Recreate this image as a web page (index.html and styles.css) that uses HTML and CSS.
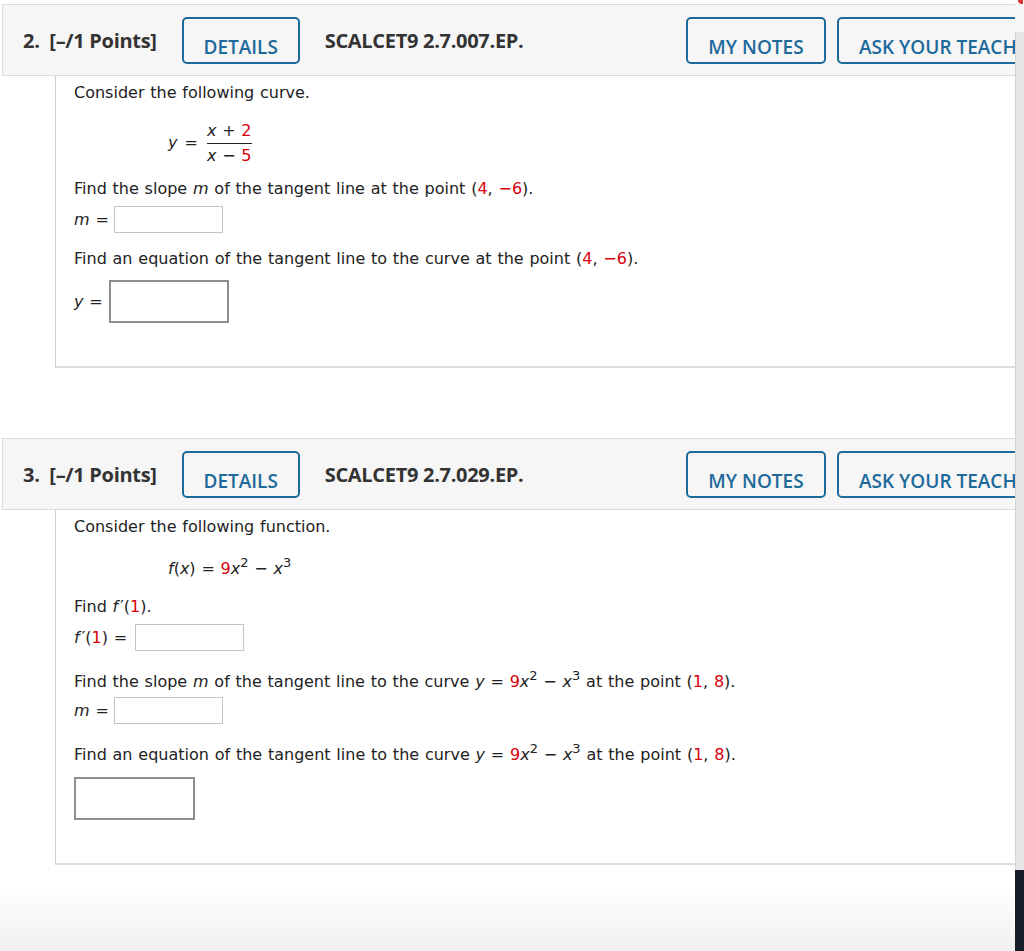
FILE: index.html
```html
<!DOCTYPE html>
<html>
<head>
<meta charset="utf-8">
<title>SCALCET9</title>
<link rel="stylesheet" href="styles.css">
</head>
<body>
<div class="screen">
  <main class="main">
    <section class="question">
      <header class="qhead">
        <span class="qnum">2.&nbsp; [–/1 Points]</span>
        <span class="btn details">DETAILS</span>
        <span class="qcode">SCALCET9 2.7.007.EP.</span>
        <span class="btn notes">MY NOTES</span>
        <span class="btn ask">ASK YOUR TEACHER</span>
      </header>
      <div class="qbody">
        <p class="line l-consider">Consider the following curve.</p>
        <div class="eq eq-frac">
          <span class="var">y</span><span class="op">=</span>
          <span class="frac">
            <span class="num"><span class="var">x</span> + <span class="red">2</span></span>
            <span class="den"><span class="var">x</span> − <span class="red">5</span></span>
          </span>
        </div>
        <p class="line l-slope1">Find the slope <span class="var">m</span> of the tangent line at the point (<span class="red">4</span>, <span class="red">−6</span>).</p>
        <div class="answer a-m1"><span class="var">m</span>&nbsp;=<span class="box small"></span></div>
        <p class="line l-eq1">Find an equation of the tangent line to the curve at the point (<span class="red">4</span>, <span class="red">−6</span>).</p>
        <div class="answer a-y1"><span class="var">y</span>&nbsp;=<span class="box big"></span></div>
      </div>
    </section>

    <section class="question q3">
      <header class="qhead">
        <span class="qnum">3.&nbsp; [–/1 Points]</span>
        <span class="btn details">DETAILS</span>
        <span class="qcode">SCALCET9 2.7.029.EP.</span>
        <span class="btn notes">MY NOTES</span>
        <span class="btn ask">ASK YOUR TEACHER</span>
      </header>
      <div class="qbody">
        <p class="line l-consider">Consider the following function.</p>
        <div class="eq eq-fx"><span class="var">f</span>(<span class="var">x</span>) = <span class="red">9</span><span class="var">x</span><sup>2</sup> − <span class="var">x</span><sup>3</sup></div>
        <p class="line l-find">Find <span class="var">f</span><span class="prime">′</span>(<span class="red">1</span>).</p>
        <div class="answer a-f"><span class="var">f</span><span class="prime">′</span>(<span class="red">1</span>)&nbsp;=<span class="box small"></span></div>
        <p class="line l-slope2">Find the slope <span class="var">m</span> of the tangent line to the curve <span class="var">y</span> = <span class="red">9</span><span class="var">x</span><sup>2</sup> − <span class="var">x</span><sup>3</sup> at the point (<span class="red">1</span>, <span class="red">8</span>).</p>
        <div class="answer a-m2"><span class="var">m</span>&nbsp;=<span class="box small"></span></div>
        <p class="line l-eq2">Find an equation of the tangent line to the curve <span class="var">y</span> = <span class="red">9</span><span class="var">x</span><sup>2</sup> − <span class="var">x</span><sup>3</sup> at the point (<span class="red">1</span>, <span class="red">8</span>).</p>
        <div class="answer a-last"><span class="box big wide"></span></div>
      </div>
    </section>
  </main>
  <aside class="scroll">
    <span class="scroll-top"><span class="pen"></span></span>
    <span class="scroll-track"></span>
    <span class="scroll-dark"></span>
  </aside>
</div>
</body>
</html>
```

FILE: styles.css
```css
html, body {
  margin: 0;
  padding: 0;
}
body {
  width: 1024px;
  height: 951px;
  overflow: hidden;
  background: linear-gradient(to bottom, #ffffff 0px, #ffffff 885px, #f0f0f0 951px);
  font-family: "DejaVu Sans", Verdana, sans-serif;
  color: #222;
}
.screen {
  display: flex;
  height: 951px;
}
.main {
  width: 1015px;
  flex: none;
  overflow: hidden;
  padding-top: 4px;
  box-sizing: border-box;
}
.question + .question {
  margin-top: 70px;
}
.qhead {
  margin-left: 2px;
  width: 1075px;
  height: 72px;
  box-sizing: border-box;
  border: 1px solid #dcdcdc;
  border-right: none;
  background: #f6f6f6;
  display: flex;
  align-items: center;
  padding-left: 20px;
  font-family: "Open Sans", sans-serif;
  font-weight: 700;
  font-size: 20px;
  color: #333;
  white-space: nowrap;
}
.qnum {
  margin-right: 25px;
  letter-spacing: -0.3px;
}
.qcode {
  margin-left: 25px;
  letter-spacing: -0.3px;
}
.btn {
  flex: none;
  box-sizing: border-box;
  height: 47px;
  border: 2px solid #1d6a9b;
  border-radius: 5px;
  color: #1d6a9b;
  font-weight: 600;
  font-size: 19px;
  line-height: 22px;
  padding: 17px 20px 4px;
  text-align: center;
}
.details {
  width: 118px;
  padding-left: 0;
  padding-right: 0;
}
.notes {
  width: 140px;
  margin-left: auto;
  padding-left: 0;
  padding-right: 0;
}
.ask {
  margin-left: 11px;
  width: 240px;
  text-align: left;
}
.qbody {
  margin-left: 55px;
  border-left: 1px solid #cfcfcf;
  border-bottom: 2px solid #dedede;
  padding: 7px 0 43px 18px;
  font-size: 16px;
  line-height: 20px;
  word-spacing: 0.7px;
}
.line {
  margin: 0;
  white-space: nowrap;
}
.var {
  font-style: italic;
}
.prime {
  margin-left: 2px;
}
.red {
  color: #d8000c;
}
sup {
  font-size: 13px;
  line-height: 0;
  vertical-align: 7px;
}
.eq {
  padding-left: 94px;
}
.eq-frac {
  display: flex;
  align-items: center;
  margin-top: 17px;
  height: 46px;
}
.op {
  margin: 0 6px 0 7px;
}
.frac {
  display: inline-flex;
  flex-direction: column;
  align-items: center;
  padding: 0 3px;
}
.num {
  line-height: 20px;
  border-bottom: 1px solid #222;
  padding: 0 0 2px;
}
.den {
  line-height: 20px;
  padding-top: 2px;
}
.l-slope1 { margin-top: 13px; }
.answer {
  display: flex;
  align-items: center;
  white-space: nowrap;
}
.box {
  display: inline-block;
  box-sizing: border-box;
  background: #fff;
}
.box.small {
  width: 109px;
  height: 27px;
  border: 1px solid #c4c4c4;
  margin-left: 5px;
}
.a-f .box.small {
  margin-left: 8px;
}
.box.big {
  width: 120px;
  height: 43px;
  border: 2px solid #8e8e8e;
  margin-left: 6px;
}
.box.wide {
  margin-left: 0;
  width: 121px;
}
.a-m1 { margin-top: 7px; }
.l-eq1 { margin-top: 16px; }
.a-y1 { margin-top: 11px; }

.eq-fx { margin-top: 22px; }
.l-find { margin-top: 18px; }
.a-f { margin-top: 7px; }
.l-slope2 { margin-top: 21px; }
.a-m2 { margin-top: 5px; }
.l-eq2 { margin-top: 21px; }
.a-last { margin-top: 12px; }

.scroll {
  width: 9px;
  flex: none;
  display: flex;
  flex-direction: column;
}
.scroll-top {
  height: 32px;
  background: #f7f7f7;
  position: relative;
}
.pen {
  position: absolute;
  left: 3px;
  top: 0;
  width: 5px;
  height: 4px;
  background: #d8342c;
  border-radius: 0 0 0 5px;
}
.scroll-track {
  flex: 1;
  background: #e6e6e6;
  border-left: 1px solid #d4d4d4;
}
.scroll-dark {
  height: 81px;
  background: #161c28;
}
```
